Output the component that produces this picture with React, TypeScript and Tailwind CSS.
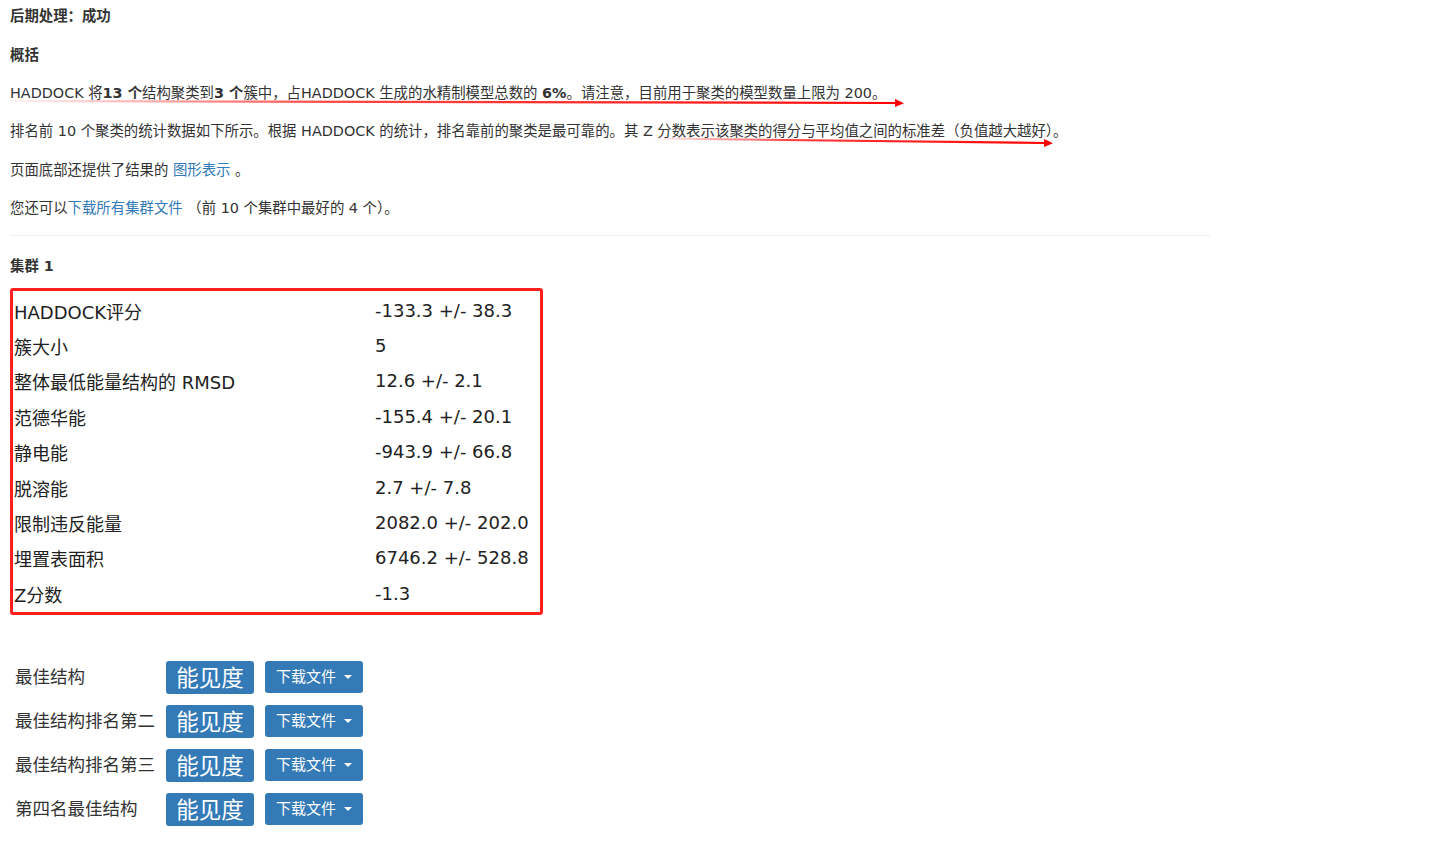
import React from "react";

const stats: [string, string][] = [
  ["HADDOCK评分", "-133.3 +/- 38.3"],
  ["簇大小", "5"],
  ["整体最低能量结构的 RMSD", "12.6 +/- 2.1"],
  ["范德华能", "-155.4 +/- 20.1"],
  ["静电能", "-943.9 +/- 66.8"],
  ["脱溶能", "2.7 +/- 7.8"],
  ["限制违反能量", "2082.0 +/- 202.0"],
  ["埋置表面积", "6746.2 +/- 528.8"],
  ["Z分数", "-1.3"],
];

const best = ["最佳结构", "最佳结构排名第二", "最佳结构排名第三", "第四名最佳结构"];

function Annotations() {
  return (
    <svg className="pointer-events-none absolute left-0 top-0" width="1440" height="848">
      <defs>
        <linearGradient id="fade1" x1="10" y1="0" x2="903" y2="0" gradientUnits="userSpaceOnUse">
          <stop offset="0" stopColor="#ff2a2a" stopOpacity="0.05" />
          <stop offset="0.35" stopColor="#ff1a1a" stopOpacity="0.8" />
          <stop offset="1" stopColor="#ff0000" />
        </linearGradient>
        <linearGradient id="fade2" x1="655" y1="0" x2="1052" y2="0" gradientUnits="userSpaceOnUse">
          <stop offset="0" stopColor="#ff2a2a" stopOpacity="0.05" />
          <stop offset="0.35" stopColor="#ff1a1a" stopOpacity="0.85" />
          <stop offset="1" stopColor="#ff0000" />
        </linearGradient>
      </defs>
      <line x1="10" y1="101" x2="896" y2="103" stroke="url(#fade1)" strokeWidth="2.2" />
      <path d="M895 99 L904 103.2 L895 107 Z" fill="#ff0000" />
      <line x1="655" y1="138.5" x2="1045" y2="143" stroke="url(#fade2)" strokeWidth="2.2" />
      <path d="M1044 139 L1053 143.3 L1044 147 Z" fill="#ff0000" />
    </svg>
  );
}

export default function App() {
  return (
    <div
      className="relative min-h-[848px] w-[1440px] bg-white text-[#333]"
      style={{ fontFamily: '"DejaVu Sans", "Noto Sans CJK SC", sans-serif' }}
    >
      <div className="flex flex-col px-[10px] pt-[6px] text-[14.4px] leading-[20px]">
        <p className="font-bold">后期处理：成功</p>
        <p className="mt-[19px] font-bold">概括</p>
        <p className="mt-[18px]">
          HADDOCK 将<b>13 个</b>结构聚类到<b>3 个</b>簇中，占HADDOCK 生成的水精制模型总数的 <b>6%</b>。请注意，目前用于聚类的模型数量上限为 200。
        </p>
        <p className="mt-[18px]">
          排名前 10 个聚类的统计数据如下所示。根据 HADDOCK 的统计，排名靠前的聚类是最可靠的。其 Z 分数表示该聚类的得分与平均值之间的标准差（负值越大越好）。
        </p>
        <p className="mt-[19px]">
          页面底部还提供了结果的 <a className="text-[#337ab7]">图形表示</a> 。
        </p>
        <p className="mt-[18px]">
          您还可以<a className="text-[#337ab7]">下载所有集群文件</a> （前 10 个集群中最好的 4 个）。
        </p>
        <hr className="mt-[17px] w-[1200px] border-t border-[#eee]" />
        <p className="mt-[20px] font-bold">集群 1</p>

        <div className="mt-[12px] w-[533px] rounded-[3px] border-[3px] border-[#ff1f1f] pl-[1px] pt-[2px] text-[18px] text-[#222]">
          {stats.map(([k, v]) => (
            <div key={k} className="flex h-[35.4px] items-center">
              <span className="mt-[4px] w-[361px]">{k}</span>
              <span>{v}</span>
            </div>
          ))}
        </div>

        <div className="mt-[46px] flex flex-col gap-[11px] pl-[5px]">
          {best.map((b) => (
            <div key={b} className="flex h-[33px] items-center">
              <span className="w-[151px] text-[17.5px] text-[#333]">{b}</span>
              <button className="flex h-[33px] w-[88px] items-center justify-center rounded-[3px] bg-[#337ab7] pt-[2px] text-[22.5px] text-white">
                能见度
              </button>
              <button className="ml-[11px] flex h-[32px] w-[98px] items-center justify-center gap-[8px] rounded-[3px] bg-[#337ab7] text-[15px] text-white">
                下载文件
                <span className="h-0 w-0 border-x-[4px] border-t-[4px] border-x-transparent border-t-white" />
              </button>
            </div>
          ))}
        </div>
      </div>
      <Annotations />
    </div>
  );
}
